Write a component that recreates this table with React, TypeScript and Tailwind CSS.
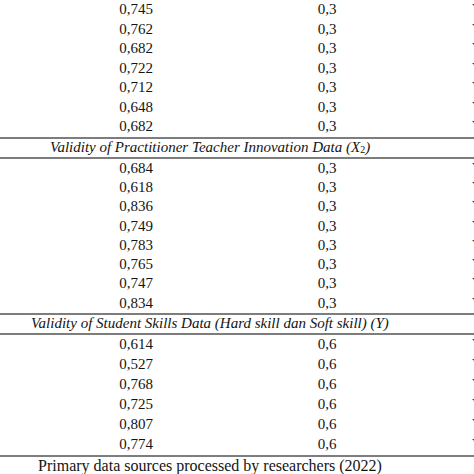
import React from "react";

const sectionA = ["0,745", "0,762", "0,682", "0,722", "0,712", "0,648", "0,682"];
const sectionB = ["0,684", "0,618", "0,836", "0,749", "0,783", "0,765", "0,747", "0,834"];
const sectionC = ["0,614", "0,527", "0,768", "0,725", "0,807", "0,774"];

function Row({ value, limit, h }: { value: string; limit: string; h: string }) {
  return (
    <div className={`grid grid-cols-[272px_110px_1fr] items-center ${h}`}>
      <div className="text-center">{value}</div>
      <div className="text-center">{limit}</div>
      <div className="pl-[90px] whitespace-nowrap">Valid</div>
    </div>
  );
}

function Rule() {
  return <div className="h-[2px] w-full bg-[#7d7d7d]" />;
}

function Heading({ children }: { children: React.ReactNode }) {
  return (
    <div className="h-[18px] w-[420px] flex items-center justify-center italic whitespace-nowrap">
      {children}
    </div>
  );
}

export default function App() {
  return (
    <div
      className="w-[474px] h-[474px] overflow-hidden bg-white text-[#141414] text-[15px] leading-none"
      style={{ fontFamily: '"Liberation Serif", "DejaVu Serif", serif' }}
    >
      {sectionA.map((v, i) => (
        <Row key={`a${i}`} value={v} limit="0,3" h="h-[19.5px]" />
      ))}
      <Rule />
      <Heading>
        Validity of Practitioner Teacher Innovation Data (X<sub className="text-[10px] not-italic">2</sub>)
      </Heading>
      <Rule />
      {sectionB.map((v, i) => (
        <Row key={`b${i}`} value={v} limit="0,3" h="h-[19.3px]" />
      ))}
      <Rule />
      <Heading>Validity of Student Skills Data (Hard skill dan Soft skill) (Y)</Heading>
      <Rule />
      {sectionC.map((v, i) => (
        <Row key={`c${i}`} value={v} limit="0,6" h="h-[20px]" />
      ))}
      <Rule />
      <div className="w-[420px] pt-[1px] text-center text-[16px] whitespace-nowrap">
        Primary data sources processed by researchers (2022)
      </div>
    </div>
  );
}
